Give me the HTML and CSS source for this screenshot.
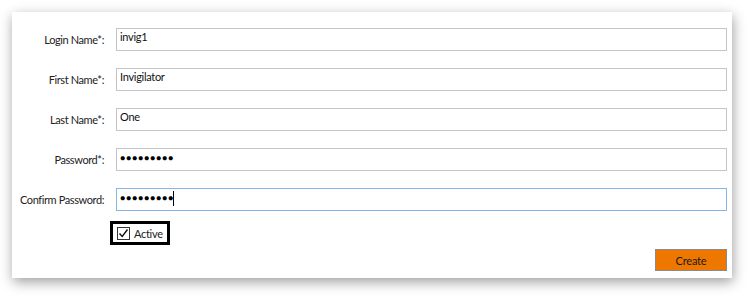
FILE: index.html
```html
<!DOCTYPE html>
<html>
<head>
<meta charset="utf-8">
<link rel="stylesheet" href="styles.css">
</head>
<body>
<div class="panel">
  <div class="form">
    <label class="lbl">Login Name*:</label>
    <div class="field">invig1</div>
    <label class="lbl">First Name*:</label>
    <div class="field">Invigilator</div>
    <label class="lbl">Last Name*:</label>
    <div class="field">One</div>
    <label class="lbl">Password*:</label>
    <div class="field dots">●●●●●●●●●</div>
    <label class="lbl">Confirm Password:</label>
    <div class="field dots focus">●●●●●●●●●<span class="caret"></span></div>
  </div>
  <div class="check-row">
    <div class="check">
      <span class="box"><svg width="11" height="11" viewBox="0 0 11 11"><path d="M1.5 5.5 L4.2 8.5 L9.5 1.5" fill="none" stroke="#111" stroke-width="1.4"/></svg></span>
      <span class="check-label">Active</span>
    </div>
  </div>
  <div class="actions">
    <button class="btn">Create</button>
  </div>
</div>
</body>
</html>
```

FILE: styles.css
```css
html, body {
  margin: 0;
  padding: 0;
  background: #ffffff;
}
body {
  font-family: Lato, "Noto Sans", sans-serif;
  font-size: 11px;
  letter-spacing: -0.3px;
  color: #222;
  width: 750px;
  height: 297px;
  overflow: hidden;
}
.panel {
  margin: 12px 0 0 12px;
  width: 720px;
  height: 266px;
  box-sizing: border-box;
  background: #fff;
  box-shadow: 1px 4px 12px rgba(0, 0, 0, 0.38);
  padding: 16px 5px 0 0;
}
.form {
  display: grid;
  grid-template-columns: 92px 1fr;
  column-gap: 12px;
  row-gap: 17px;
  align-items: center;
}
.lbl {
  text-align: right;
  color: #222;
  white-space: nowrap;
  letter-spacing: -0.4px;
}
.field {
  height: 23px;
  box-sizing: border-box;
  border: 1px solid #c3c3cb;
  padding: 0 3px;
  line-height: 16px;
  color: #111;
}
.field.dots {
  font-size: 8.5px;
  letter-spacing: 0.9px;
  line-height: 18px;
  padding-left: 3px;
  color: #000;
}
.field.focus {
  border-color: #84b6e8;
}
.caret {
  display: inline-block;
  width: 1px;
  height: 15px;
  background: #000;
  vertical-align: middle;
  margin-left: -1px;
}
.check-row {
  margin: 10px 0 0 98px;
  display: flex;
}
.check {
  display: flex;
  align-items: center;
  border: 3px solid #000;
  height: 24px;
  box-sizing: border-box;
  padding: 0 4px 0 4px;
  gap: 4px;
}
.box {
  width: 13px;
  height: 13px;
  box-sizing: border-box;
  border: 1px solid #333;
  display: flex;
  align-items: center;
  justify-content: center;
  background: #fff;
}
.check-label {
  color: #222;
}
.actions {
  display: flex;
  justify-content: flex-end;
  margin-top: 4px;
}
.btn {
  width: 72px;
  height: 22px;
  background: #ee7700;
  border: 1px solid #8a8a8a;
  font-family: Lato, "Noto Sans", sans-serif;
  font-size: 11px;
  letter-spacing: -0.2px;
  color: #1a1a1a;
  padding: 0;
}
```
